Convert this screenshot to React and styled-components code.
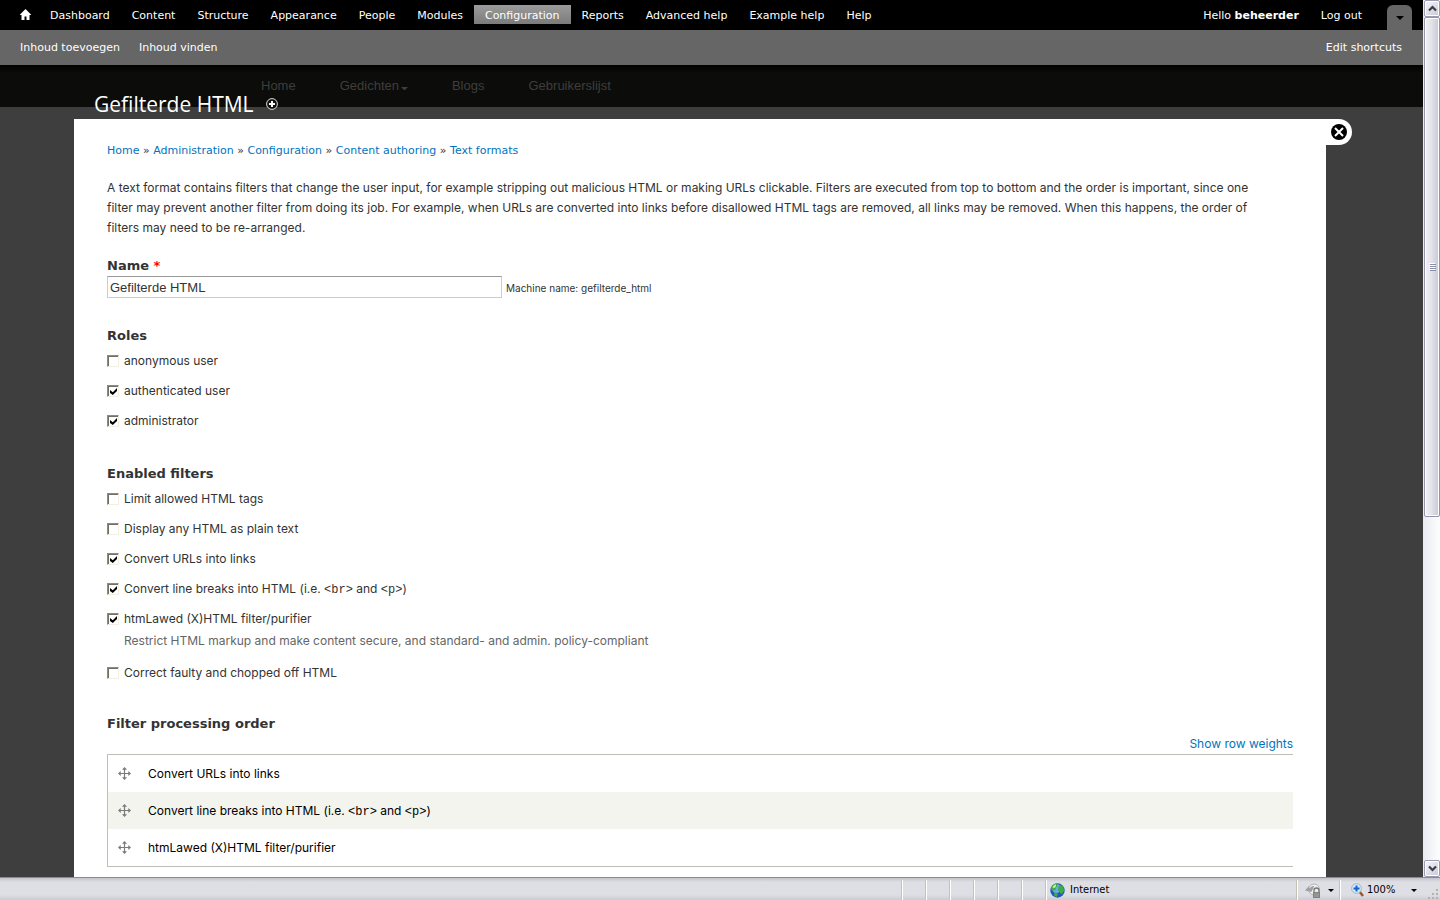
import React, { useState } from 'react'
import styled, { createGlobalStyle } from 'styled-components'

const GlobalStyle = createGlobalStyle`
  * { box-sizing: border-box; }
  body {
    margin: 0;
    background: #3e3e3e;
    font-family: "DejaVu Sans", sans-serif;
    font-size: 11px;
    line-height: 20px;
    color: #333;
  }
  a { text-decoration: none; }
  button { border: 0; padding: 0; background: none; font: inherit; color: inherit; }
  h1, h2, p, ul, ol { margin: 0; padding: 0; list-style: none; font-weight: normal; }
`
const Window = styled.div`
  display: flex;
  flex-direction: column;
  height: 100vh;
  overflow: hidden;
`
const Viewport = styled.div`
  display: flex;
  flex: 1;
  min-height: 0;
`
const Page = styled.div`
  display: flex;
  flex-direction: column;
  flex: 1;
  min-width: 0;
  overflow: hidden;
`

/* toolbar */
const Toolbar = styled.nav`
  display: flex;
  justify-content: space-between;
  height: 30px;
  flex: none;
  padding: 5px 11px 0 8px;
  background: #000;
  color: #fff;
  line-height: 21px;
`
const Menu = styled.ul`
  display: flex;
`
const MenuLink = styled.a`
  display: block;
  height: 19px;
  padding: 0 11px;
  color: #fff;
  white-space: nowrap;
  background: ${(p) => (p.$active ? 'linear-gradient(#9b9b9b, #7b7b7b)' : 'none')};
`
const HomeLink = styled(MenuLink)`
  padding: 4px 8px 0 12px;
  svg { display: block; }
`
const Toggle = styled.button`
  display: grid;
  place-items: center;
  width: 25px;
  height: 25px;
  margin-left: 14px;
  border-radius: 6px 6px 0 0;
  background: #666;
`
const Shortcuts = styled.div`
  display: flex;
  align-items: center;
  justify-content: space-between;
  flex: none;
  height: 35px;
  padding: 0 21px 0 20px;
  background: #666;
`
const ShortcutList = styled.ul`
  display: flex;
  gap: 19px;
`
const ShortcutLink = styled.a`
  color: #fff;
`

/* site under the overlay */
const Stage = styled.div`
  display: grid;
  grid-template-columns: 1fr;
  flex: 1;
  > * { grid-area: 1 / 1; }
`
const Site = styled.div`
  background: #3e3e3e;
`
const SiteMenu = styled.ul`
  display: flex;
  height: 42px;
  padding: 11px 0 0 261px;
  gap: 44px;
  background: linear-gradient(#000, #0c0c0a 8px);
  font-family: "Liberation Sans", Arial, sans-serif;
  font-size: 13px;
  a { color: #3e3e3d; }
  svg { margin-left: 2px; }
`

/* overlay */
const Overlay = styled.div`
  padding: 0 71px 0 74px;
`
const TitleBar = styled.header`
  display: flex;
  align-items: center;
  gap: 12px;
  height: 54px;
  padding: 24px 20px 0;
  h1 {
    font-family: "Open Sans", "Noto Sans", sans-serif;
    font-size: 21px;
    line-height: 30px;
    color: #fff;
  }
`
const IconButton = styled.button`
  display: flex;
`
const PanelRow = styled.div`
  display: flex;
  align-items: flex-start;
`
const Panel = styled.main`
  flex: 1;
  min-width: 0;
  padding: 22px 33px 33px;
  background: #fff;
  font-family: Inter, sans-serif;
  font-size: 12px;
`
const Close = styled.button`
  display: flex;
  align-items: center;
  justify-content: center;
  width: 26px;
  height: 26px;
  border-radius: 0 13px 13px 0;
  background: #fff;
`
const Breadcrumb = styled.nav`
  color: #333;
  font-family: "DejaVu Sans", sans-serif;
  font-size: 11px;
  a { color: #0074bd; }
`
const Intro = styled.p`
  margin-top: 17px;
  padding-right: 24px;
`
const NameLabel = styled.label`
  display: block;
  margin-top: 18px;
  font-family: "DejaVu Sans", sans-serif;
  font-size: 13px;
  font-weight: bold;
  span { color: #f00; }
`
const NameRow = styled.div`
  display: flex;
  align-items: center;
  gap: 4px;
`
const TextInput = styled.input`
  width: 395px;
  height: 22px;
  padding: 1px 2px;
  border: 1px solid #ccc;
  border-top-color: #999;
  color: #333;
  font-family: "Liberation Sans", Arial, sans-serif;
  font-size: 13px;
`
const MachineName = styled.small`
  padding-top: 2px;
  font-size: 10px;
`
const Group = styled.fieldset`
  margin: 27px 0 0;
  padding: 0;
  border: 0;
  min-width: 0;
`
const Legend = styled.legend`
  padding: 0;
  font-family: "DejaVu Sans", sans-serif;
  font-size: 13px;
  font-weight: bold;
  line-height: 21px;
`
const Option = styled.div`
  display: grid;
  grid-template-columns: 12px 1fr;
  column-gap: 5px;
  align-items: center;
  padding: 5px 0;
  label { justify-self: start; }
`
const Check = styled.input`
  appearance: none;
  width: 12px;
  height: 12px;
  margin: 0;
  border: 1px solid #f1efe2;
  border-top-color: #8c8c86;
  border-left-color: #8c8c86;
  background: #fff;
  box-shadow: inset 1px 1px 0 #716f64;
  &:checked::after {
    content: "";
    display: block;
    width: 7px;
    height: 7px;
    margin: 2px;
    background: #000;
    clip-path: polygon(0 28%, 40% 60%, 100% 0, 100% 42%, 40% 100%, 0 70%);
  }
`
const Hint = styled.p`
  grid-column: 2;
  line-height: 24px;
  color: #666;
`
const Code = styled.code`
  font-family: "Liberation Mono", monospace;
  font-size: 12px;
  line-height: 1;
`
const Heading = styled.h2`
  margin-top: 26px;
  font-family: "DejaVu Sans", sans-serif;
  font-size: 13px;
  font-weight: bold;
`
const WeightToggle = styled.div`
  text-align: right;
  a { color: #0074bd; }
`
const OrderTable = styled.table`
  width: 100%;
  border: 1px solid #bebfb9;
  border-right: 0;
  border-spacing: 0;
  color: #000;
  td { height: 37px; padding: 0; }
  td:first-child { width: 40px; padding-left: 10px; }
  tr:nth-child(even) { background: #f3f4ee; }
  svg { display: block; }
`

/* scrollbar */
const Scrollbar = styled.div`
  display: flex;
  flex-direction: column;
  width: 17px;
  padding-left: 1px;
  background: linear-gradient(90deg, #e9ebf2, #fefefe);
`
const ScrollButton = styled.button`
  display: grid;
  place-items: center;
  height: 17px;
  border: 1px solid #9a9ab0;
  border-radius: 2px;
  box-shadow: inset 0 0 0 1px #fff;
  background: linear-gradient(135deg, #f6f6fa, #c8c9d8);
`
const Thumb = styled.div`
  display: grid;
  place-items: center;
  height: 500px;
  border: 1px solid #9494a8;
  border-radius: 2px;
  box-shadow: inset 0 0 0 1px #fff;
  background: linear-gradient(90deg, #f4f2f6, #e4e2ea 45%, #c6c8d8);
`
const Track = styled.div`
  flex: 1;
`

/* status bar */
const StatusBar = styled.footer`
  display: flex;
  flex: none;
  height: 23px;
  padding-top: 2px;
  border-top: 1px solid #8b8b90;
  background: linear-gradient(#c3c3c9, #dedfe4 4px, #dedfe5 17px, #cbccd2);
  color: #000;
  font-family: "DejaVu Sans Condensed", "DejaVu Sans", sans-serif;
`
const StatusFill = styled.div`
  flex: 1;
`
const StatusCell = styled.div`
  display: flex;
  align-items: center;
  width: ${(p) => p.$w}px;
  padding-left: ${(p) => p.$pad || 0}px;
  gap: ${(p) => p.$gap || 4}px;
  border-left: 1px solid #c5c2b4;
  box-shadow: inset 1px 0 0 #fff;
  svg { flex: none; }
`

const adminMenu = ['Dashboard', 'Content', 'Structure', 'Appearance', 'People', 'Modules', 'Configuration', 'Reports', 'Advanced help', 'Example help', 'Help']
const crumbs = ['Home', 'Administration', 'Configuration', 'Content authoring', 'Text formats']

const LineBreaks = () => <>Convert line breaks into HTML (i.e. <Code>&lt;br&gt;</Code> and <Code>&lt;p&gt;</Code>)</>

const roles = [
  { id: 'anonymous', label: 'anonymous user' },
  { id: 'authenticated', label: 'authenticated user', on: true },
  { id: 'administrator', label: 'administrator', on: true },
]
const filters = [
  { id: 'limit', label: 'Limit allowed HTML tags' },
  { id: 'plain', label: 'Display any HTML as plain text' },
  { id: 'urls', label: 'Convert URLs into links', on: true },
  { id: 'breaks', label: <LineBreaks />, on: true },
  {
    id: 'htmlawed',
    label: 'htmLawed (X)HTML filter/purifier',
    on: true,
    hint: 'Restrict HTML markup and make content secure, and standard- and admin. policy-compliant',
  },
  { id: 'correct', label: 'Correct faulty and chopped off HTML' },
]

const Arrow = ({ color = '#000', size = 8 }) => (
  <svg width={size} height={size / 2} viewBox="0 0 8 4"><path d="M0 0h8L4 4z" fill={color} /></svg>
)

const Chevron = ({ up }) => (
  <svg width="9" height="7" viewBox="0 0 9 7">
    <path d={up ? 'M1 5.5 4.5 2 8 5.5' : 'M1 1.5 4.5 5 8 1.5'} fill="none" stroke="#3b3b44" strokeWidth="2.2" />
  </svg>
)

const MoveIcon = () => (
  <svg width="13" height="13" viewBox="0 0 13 13">
    <path d="M6.5 1v11M1 6.5h11" stroke="#7b7b7b" strokeWidth="1.2" />
    <path d="M6.5 0 9 2.7H4zM6.5 13 4 10.3h5zM0 6.5 2.7 4v5zM13 6.5 10.3 9V4z" fill="#7b7b7b" />
  </svg>
)

const Options = ({ title, items }) => {
  const [checked, setChecked] = useState(() => items.filter((i) => i.on).map((i) => i.id))
  const toggle = (id) =>
    setChecked(checked.includes(id) ? checked.filter((c) => c !== id) : [...checked, id])

  return (
    <Group>
      <Legend>{title}</Legend>
      {items.map((item) => (
        <Option key={item.id}>
          <Check type="checkbox" id={item.id} checked={checked.includes(item.id)} onChange={() => toggle(item.id)} />
          <label htmlFor={item.id}>{item.label}</label>
          {item.hint && <Hint>{item.hint}</Hint>}
        </Option>
      ))}
    </Group>
  )
}

const AdminToolbar = () => (
  <>
    <Toolbar>
      <Menu>
        <li>
          <HomeLink href="#" aria-label="Home">
            <svg width="11" height="11" viewBox="0 0 11 11">
              <path d="M5.5 0 11 5.5V6H9.5v5h-3V7.5h-2V11h-3V6H0v-.5z" fill="#fff" />
            </svg>
          </HomeLink>
        </li>
        {adminMenu.map((name) => (
          <li key={name}><MenuLink href="#" $active={name === 'Configuration'}>{name}</MenuLink></li>
        ))}
      </Menu>
      <Menu>
        <li><MenuLink href="#">Hello <b>beheerder</b></MenuLink></li>
        <li><MenuLink href="#">Log out</MenuLink></li>
        <li><Toggle aria-label="Toggle shortcuts"><Arrow /></Toggle></li>
      </Menu>
    </Toolbar>
    <Shortcuts>
      <ShortcutList>
        <li><ShortcutLink href="#">Inhoud toevoegen</ShortcutLink></li>
        <li><ShortcutLink href="#">Inhoud vinden</ShortcutLink></li>
      </ShortcutList>
      <ShortcutLink href="#">Edit shortcuts</ShortcutLink>
    </Shortcuts>
  </>
)

const FormatForm = () => {
  const [name, setName] = useState('Gefilterde HTML')

  return (
    <Panel>
      <Breadcrumb>
        {crumbs.map((c, i) => (
          <React.Fragment key={c}>
            {i > 0 && ' » '}
            <a href="#">{c}</a>
          </React.Fragment>
        ))}
      </Breadcrumb>
      <Intro>
        A text format contains filters that change the user input, for example stripping out malicious HTML or making
        URLs clickable. Filters are executed from top to bottom and the order is important, since one filter may
        prevent another filter from doing its job. For example, when URLs are converted into links before disallowed
        HTML tags are removed, all links may be removed. When this happens, the order of filters may need to be
        re-arranged.
      </Intro>
      <NameLabel htmlFor="name">Name <span>*</span></NameLabel>
      <NameRow>
        <TextInput id="name" value={name} onChange={(e) => setName(e.target.value)} />
        <MachineName>Machine name: gefilterde_html</MachineName>
      </NameRow>
      <Options title="Roles" items={roles} />
      <Options title="Enabled filters" items={filters} />
      <Heading>Filter processing order</Heading>
      <WeightToggle><a href="#">Show row weights</a></WeightToggle>
      <OrderTable>
        <tbody>
          {filters.filter((f) => f.on).map((f) => (
            <tr key={f.id}>
              <td><MoveIcon /></td>
              <td>{f.label}</td>
            </tr>
          ))}
        </tbody>
      </OrderTable>
    </Panel>
  )
}

const BrowserScrollbar = () => (
  <Scrollbar>
    <ScrollButton aria-label="Scroll up"><Chevron up /></ScrollButton>
    <Thumb>
      <svg width="7" height="8" viewBox="0 0 7 8">
        <path d="M0 .5h6M0 2.5h6M0 4.5h6M0 6.5h6" stroke="#fff" />
        <path d="M1 1.5h6M1 3.5h6M1 5.5h6M1 7.5h6" stroke="#8c8fa8" />
      </svg>
    </Thumb>
    <Track />
    <ScrollButton aria-label="Scroll down"><Chevron /></ScrollButton>
  </Scrollbar>
)

const BrowserStatus = () => (
  <StatusBar>
    <StatusFill />
    {[1, 2, 3, 4, 5, 6].map((n) => <StatusCell key={n} $w={24} />)}
    <StatusCell $w={251} $pad={4} $gap={5}>
      <svg width="15" height="15" viewBox="0 0 15 15">
        <circle cx="7.5" cy="7.5" r="7.2" fill="#2458b8" />
        <circle cx="6.5" cy="5.5" r="4.5" fill="#6aa8f0" />
        <path d="M1 5C2 2 4.5 .6 7 .8L7.5 3 5.5 4.5 6 6.5 4 7.5 1.5 7zM9.5 1.5l3.5 2 1.2 4-2.7 4-2-2.5L8 7l.5-3zM4 9.5l3 .8 1 1.2-1.5 2.5-2-1z" fill="#3fae3c" />
        <path d="M2.5 4.5C3 2.5 5 1.5 6 1.5L6 3 4.5 5z" fill="#d3f0b8" />
      </svg>
      Internet
    </StatusCell>
    <StatusCell $w={43} $pad={8} $gap={7}>
      <svg width="16" height="15" viewBox="0 0 16 15">
        <circle cx="9" cy="6.5" r="5.5" fill="#ededed" stroke="#b4b4b4" />
        <path d="M0 7.5 4 3v2.5C6 3.500 8 3 9 3L8 6.5C6.5 6.5 7 8 6.5 9z" fill="#a0a0a0" />
        <path d="M9 9V7.5a2.5 2.5 0 0 1 5 0V9" fill="none" stroke="#777" strokeWidth="1.3" />
        <path d="M8 9h7v6H8z" fill="#808080" />
        <path d="M9 11h5M9 13h5" stroke="#aaa" />
      </svg>
      <Arrow size={6} />
    </StatusCell>
    <StatusCell $w={101} $pad={11} $gap={3}>
      <svg width="13" height="14" viewBox="0 0 13 14">
        <path d="m8 8 4 5" stroke="#9b5a2c" strokeWidth="2.5" />
        <circle cx="5.5" cy="5.5" r="4.9" fill="#d5e8fb" stroke="#9db4cc" />
        <path d="M5.5 2.5v6M2.5 5.5h6" stroke="#1463c8" strokeWidth="2" />
      </svg>
      100%
      <StatusFill />
      <Arrow size={6} />
      <svg width="20" height="20" viewBox="0 0 20 20">
        <path d="M16 9h2v2h-2zM12 13h2v2h-2zM16 13h2v2h-2zM8 17h2v2H8zM12 17h2v2h-2zM16 17h2v2h-2z" fill="#b5b3a8" />
      </svg>
    </StatusCell>
  </StatusBar>
)

const App = () => (
  <>
    <GlobalStyle />
    <Window>
      <Viewport>
        <Page>
          <AdminToolbar />
          <Stage>
            <Site>
              <SiteMenu>
                <li><a href="#">Home</a></li>
                <li><a href="#">Gedichten<Arrow color="#3e3e3d" size={7} /></a></li>
                <li><a href="#">Blogs</a></li>
                <li><a href="#">Gebruikerslijst</a></li>
              </SiteMenu>
            </Site>
            <Overlay>
              <TitleBar>
                <h1>Gefilterde HTML</h1>
                <IconButton aria-label="Add to shortcuts">
                  <svg width="12" height="12" viewBox="0 0 12 12">
                    <circle cx="6" cy="6" r="5.4" fill="#111" stroke="#ddd" />
                    <path d="M6 3v6M3 6h6" stroke="#fff" strokeWidth="2" />
                  </svg>
                </IconButton>
              </TitleBar>
              <PanelRow>
                <FormatForm />
                <Close aria-label="Close overlay">
                  <svg width="16" height="16" viewBox="0 0 16 16">
                    <circle cx="8" cy="8" r="8" />
                    <path d="m4 4 8 8M12 4l-8 8" stroke="#fff" strokeWidth="2" />
                  </svg>
                </Close>
              </PanelRow>
            </Overlay>
          </Stage>
        </Page>
        <BrowserScrollbar />
      </Viewport>
      <BrowserStatus />
    </Window>
  </>
)

export default App
